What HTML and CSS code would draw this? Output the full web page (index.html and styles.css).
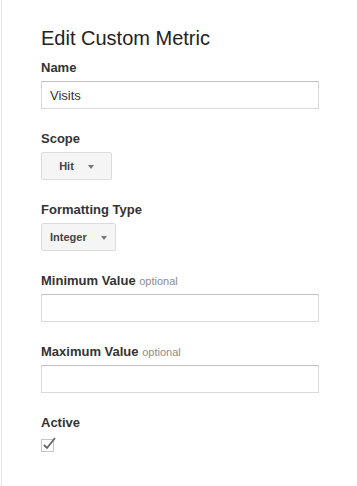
FILE: index.html
```html
<!DOCTYPE html>
<html lang="en">
<head>
    <meta charset="UTF-8">
    <meta name="viewport" content="width=device-width, initial-scale=1.0">
    <title>Edit Custom Metric</title>
    <link rel="stylesheet" href="styles.css">
</head>
<body>
    <div class="panel">
        <h1>Edit Custom Metric</h1>

        <div class="form">
            <!-- Name -->
            <div class="field">
                <label for="metricName">Name</label>
                <input type="text" id="metricName" value="Visits">
            </div>

            <!-- Scope -->
            <div class="field">
                <label>Scope</label>
                <div class="select">Hit <span class="arrow"></span></div>
            </div>

            <!-- Formatting Type -->
            <div class="field">
                <label>Formatting Type</label>
                <div class="select">Integer <span class="arrow"></span></div>
            </div>

            <div class="field">
                <label for="minValue">Minimum Value <span class="hint">optional</span></label>
                <input type="text" id="minValue">
            </div>

            <div class="field">
                <label for="maxValue">Maximum Value <span class="hint">optional</span></label>
                <input type="text" id="maxValue">
            </div>

            <!-- Active -->
            <div class="field">
                <label>Active</label>
                <svg class="checkbox" width="16" height="16" viewBox="0 0 16 16">
                    <rect x="0.5" y="3.5" width="12" height="12" fill="#fff" stroke="#c6c6c6"/>
                    <path d="M3 9 L6 12 L14 2" fill="none" stroke="#666" stroke-width="1.8"/>
                </svg>
            </div>
        </div>
    </div>
</body>
</html>
```

FILE: styles.css
```css
body {
    margin: 0;
    font-family: "Liberation Sans", Arial, sans-serif;
    color: #333;
    background: #fff;
}
.panel {
    margin-left: 1px;
    border-left: 1px solid #e3e3e3;
    min-height: 486px;
    box-sizing: border-box;
    padding: 26px 0 0 39px;
}
h1 {
    margin: 0 0 10px;
    font-size: 20px;
    line-height: 24px;
    font-weight: normal;
    color: #222;
}
.form {
    width: 278px;
    display: flex;
    flex-direction: column;
    gap: 22px;
}
.field label {
    display: block;
    font-size: 13px;
    line-height: 16px;
    font-weight: bold;
    color: #333;
    margin-bottom: 5px;
}
.field .hint {
    font-size: 11px;
    font-weight: normal;
    color: #8c8c8c;
}
.field input {
    display: block;
    width: 100%;
    height: 28px;
    box-sizing: border-box;
    padding: 0 8px;
    border: 1px solid #d9d9d9;
    border-top-color: #c0c0c0;
    font-family: inherit;
    font-size: 13px;
    color: #333;
    outline: none;
}
.select {
    display: inline-flex;
    align-items: center;
    justify-content: center;
    gap: 14px;
    min-width: 71px;
    height: 28px;
    box-sizing: border-box;
    padding: 0 8px;
    background-color: #f5f5f5;
    border: 1px solid #dcdcdc;
    border-radius: 2px;
    font-size: 11px;
    font-weight: bold;
    color: #444;
}
.select .arrow {
    width: 0;
    height: 0;
    margin-top: 2px;
    border-left: 3px solid transparent;
    border-right: 3px solid transparent;
    border-top: 4px solid #777;
}
.checkbox {
    display: block;
    margin-top: 4px;
}
```
